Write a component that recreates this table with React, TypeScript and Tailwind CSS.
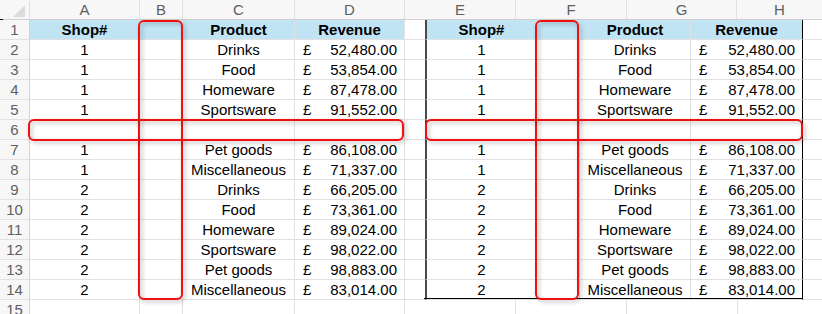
import React from "react";

type Row = { shop: string; product: string; revenue: string };

const rows: (Row | null)[] = [
  { shop: "1", product: "Drinks", revenue: "52,480.00" },
  { shop: "1", product: "Food", revenue: "53,854.00" },
  { shop: "1", product: "Homeware", revenue: "87,478.00" },
  { shop: "1", product: "Sportsware", revenue: "91,552.00" },
  null,
  { shop: "1", product: "Pet goods", revenue: "86,108.00" },
  { shop: "1", product: "Miscellaneous", revenue: "71,337.00" },
  { shop: "2", product: "Drinks", revenue: "66,205.00" },
  { shop: "2", product: "Food", revenue: "73,361.00" },
  { shop: "2", product: "Homeware", revenue: "89,024.00" },
  { shop: "2", product: "Sportsware", revenue: "98,022.00" },
  { shop: "2", product: "Pet goods", revenue: "98,883.00" },
  { shop: "2", product: "Miscellaneous", revenue: "83,014.00" },
];

const cell = "h-full border-r border-b border-[#e1e1e1] flex items-center justify-center shrink-0 pt-[1px]";

const Money = ({ value }: { value: string }) => (
  <div className="flex w-full items-center justify-between pl-[8px] pr-[7px]">
    <span>£</span>
    <span>{value}</span>
  </div>
);

const Cells = ({ row, right }: { row: Row | null; right?: boolean }) => (
  <>
    <div
      className={`${cell} ${
        right ? "w-[112px] border-l-2 border-l-[#4a4a4a]" : "w-[110px]"
      }`}
    >
      {row?.shop}
    </div>
    <div className={`${cell} w-[43px]`} />
    <div className={`${cell} ${right ? "w-[111px]" : "w-[112px]"}`}>{row?.product}</div>
    <div
      className={`${cell} ${right ? "w-[112px] border-r-black" : "w-[110px]"}`}
    >
      {row && <Money value={row.revenue} />}
    </div>
  </>
);

const HeaderCells = ({ right }: { right?: boolean }) => (
  <>
    <div
      className={`${cell} font-bold bg-[#c1e4f5] ${
        right ? "w-[112px] border-l-2 border-l-[#4a4a4a]" : "w-[110px]"
      }`}
    >
      Shop#
    </div>
    <div className={`${cell} w-[43px] bg-[#c1e4f5]`} />
    <div className={`${cell} font-bold bg-[#c1e4f5] ${right ? "w-[111px]" : "w-[112px]"}`}>
      Product
    </div>
    <div
      className={`${cell} font-bold bg-[#c1e4f5] ${
        right ? "w-[112px] border-r-black" : "w-[110px]"
      }`}
    >
      Revenue
    </div>
  </>
);

const RowNum = ({ n }: { n: number }) => (
  <div className={`${cell} w-[30px] bg-[#f7f7f7] border-r-[#d4d4d4] text-[#5f5f5f]`}>{n}</div>
);

const Shape = ({ className }: { className: string }) => (
  <div
    className={`absolute border-2 border-[#f01010] rounded-[6px] [filter:drop-shadow(2px_2px_2px_rgba(0,0,0,0.3))] ${className}`}
  />
);

export default function App() {
  return (
    <div
      className="relative w-[822px] h-[314px] overflow-hidden bg-white text-[15px] text-black"
      style={{ fontFamily: '"Liberation Sans", Arial, sans-serif' }}
    >
      {/* column letters */}
      <div className="flex h-[20px] bg-[#f7f7f7] text-[#5f5f5f] border-b border-[#cfcfcf]">
        <div className="relative w-[30px] h-full border-r border-[#e1e1e1] shrink-0">
          <div className="absolute left-[13px] top-[5px] w-0 h-0 border-l-[12px] border-l-transparent border-b-[12px] border-b-[#dcdcdc]" />
        </div>
        {[
          ["A", "w-[110px]"],
          ["B", "w-[43px]"],
          ["C", "w-[112px]"],
          ["D", "w-[110px]"],
          ["E", "w-[111px]"],
          ["F", "w-[111px]"],
          ["G", "w-[110px]"],
        ].map(([l, w]) => (
          <div key={l} className={`${w} h-full border-r border-[#e1e1e1] flex items-center justify-center shrink-0 pt-[1px]`}>
            {l}
          </div>
        ))}
        <div className="flex-1 h-full flex items-center justify-center pt-[1px]">H</div>
      </div>

      {/* table header row */}
      <div className="flex h-[20px]">
        <RowNum n={1} />
        <HeaderCells />
        <div className={`${cell} w-[20px] border-r-0`} />
        <HeaderCells right />
        <div className="flex-1 h-full border-b border-[#e1e1e1]" />
      </div>

      {rows.map((r, i) => (
        <div key={i} className="flex h-[20px]">
          <RowNum n={i + 2} />
          <Cells row={r} />
          <div className={`${cell} w-[20px] border-r-0`} />
          <Cells row={r} right />
          <div className="flex-1 h-full border-b border-[#e1e1e1]" />
        </div>
      ))}

      {/* bottom border of right table */}
      <div className="absolute top-[298px] left-[424px] w-[378px] h-[1px] bg-black" />

      {/* row 15 */}
      <div className="flex h-[20px]">
        <RowNum n={15} />
        <div className={`${cell} w-[110px]`} />
        <div className={`${cell} w-[43px]`} />
        <div className={`${cell} w-[112px]`} />
        <div className={`${cell} w-[110px]`} />
        <div className="w-[111px] h-full border-r border-[#e1e1e1] shrink-0" />
        <div className="w-[111px] h-full border-r border-[#e1e1e1] shrink-0" />
        <div className="w-[111px] h-full border-r border-[#e1e1e1] shrink-0" />
      </div>

      <div className="absolute left-0 top-[19px] w-[3px] h-[1px] bg-black" />

      <Shape className="left-[138px] top-[20px] w-[45px] h-[280px]" />
      <Shape className="left-[28px] top-[119px] w-[376px] h-[22px]" />
      <Shape className="left-[535px] top-[20px] w-[44px] h-[280px]" />
      <Shape className="left-[425px] top-[119px] w-[378px] h-[22px]" />
    </div>
  );
}
